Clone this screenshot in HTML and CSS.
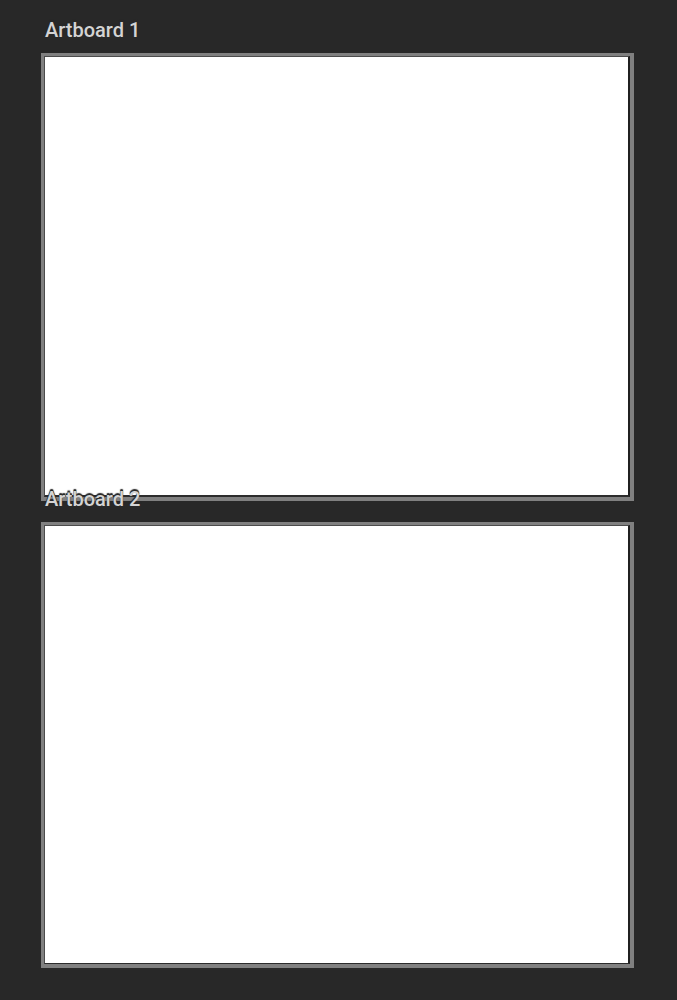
FILE: index.html
```html
<!DOCTYPE html>
<html lang="en">
<head>
<meta charset="utf-8">
<meta name="viewport" content="width=device-width, initial-scale=1">
<title>Artboards</title>
<link rel="stylesheet" href="styles.css">
</head>
<body>
<main class="canvas">
  <section class="artboard">
    <h2 class="artboard-label">Artboard 1</h2>
    <div class="artboard-frame"><div class="artboard-page"></div></div>
  </section>
  <section class="artboard">
    <h2 class="artboard-label">Artboard 2</h2>
    <div class="artboard-frame"><div class="artboard-page artboard-page-short"></div></div>
  </section>
</main>
</body>
</html>
```
FILE: styles.css
```css
* {
  box-sizing: border-box;
}

body {
  margin: 0;
  background: #282828;
  font-family: Roboto, "Liberation Sans", sans-serif;
}

.canvas {
  min-height: 100vh;
  padding: 18px 43px 32px 41px;
}

/* The next label overlaps the bottom edge of the frame above it. */
.artboard + .artboard {
  margin-top: -14px;
}

.artboard-label {
  position: relative;
  z-index: 1;
  margin: 0 0 11px;
  padding-left: 4px;
  color: #d4d4d4;
  font-size: 20px;
  font-weight: 500;
  line-height: 24px;
  text-shadow: 0 -1px 0 #282828, 0 -2px 1px #282828;
}

.artboard-frame {
  border: 4px solid #808080;
  border-top-width: 3px;
  border-left-width: 3px;
}

.artboard-page {
  aspect-ratio: 586 / 441;
  border: 1px solid #4c4c4c;
  border-right: 2px solid #202020;
  border-bottom: 2px solid #2c2c2c;
  background: #ffffff;
}

.artboard-page-short {
  aspect-ratio: 586 / 439;
  border-bottom: 1px solid #2c2c2c;
}
```
